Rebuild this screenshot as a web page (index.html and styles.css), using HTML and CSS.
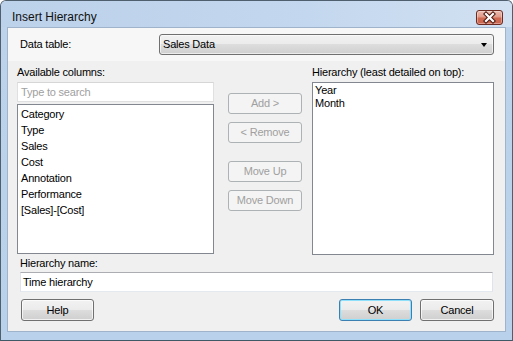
FILE: index.html
```html
<!DOCTYPE html>
<html>
<head>
<meta charset="utf-8">
<link rel="stylesheet" href="styles.css">
</head>
<body>
<div class="window">
  <div class="titlebar">
    <span class="title">Insert Hierarchy</span>
    <div class="close">
      <svg width="25" height="13" viewBox="0 0 25 13">
        <path d="M9 3 L16 10 M16 3 L9 10" stroke="#4a1a12" stroke-width="4.2" stroke-linecap="square" fill="none"/>
        <path d="M9 3 L16 10 M16 3 L9 10" stroke="#ffffff" stroke-width="2.2" stroke-linecap="square" fill="none"/>
      </svg>
    </div>
  </div>
  <div class="client">
    <div class="toppanel">
      <span class="toplabel">Data table:</span>
      <div class="combo">
        <span class="combo-text">Sales Data</span>
        <span class="arrow"></span>
      </div>
    </div>
    <div class="main">
      <div class="col-left">
        <div class="label">Available columns:</div>
        <div class="search">Type to search</div>
        <div class="list list-left">
          <div class="item">Category</div>
          <div class="item">Type</div>
          <div class="item">Sales</div>
          <div class="item">Cost</div>
          <div class="item">Annotation</div>
          <div class="item">Performance</div>
          <div class="item">[Sales]-[Cost]</div>
        </div>
      </div>
      <div class="col-buttons">
        <div class="btn disabled b-add">Add &gt;</div>
        <div class="btn disabled b-remove">&lt; Remove</div>
        <div class="btn disabled b-up">Move Up</div>
        <div class="btn disabled b-down">Move Down</div>
      </div>
      <div class="col-right">
        <div class="label">Hierarchy (least detailed on top):</div>
        <div class="list list-right">
          <div class="ritem">Year</div>
          <div class="ritem">Month</div>
        </div>
      </div>
    </div>
    <div class="namesec">
      <div class="label">Hierarchy name:</div>
      <div class="textbox">Time hierarchy</div>
    </div>
    <div class="footer">
      <div class="btn enabled b-help">Help</div>
      <div class="spacer"></div>
      <div class="btn enabled focused b-ok">OK</div>
      <div class="btn enabled b-cancel">Cancel</div>
    </div>
  </div>
</div>
</body>
</html>
```
FILE: styles.css
```css
* { box-sizing: border-box; }
html, body { margin: 0; padding: 0; background: #ffffff; }
body {
  font-family: "Liberation Sans", Arial, sans-serif;
  font-size: 11px;
  letter-spacing: -0.2px;
  color: #000;
}
.window {
  width: 513px;
  height: 341px;
  border: 1px solid #4f5f6e;
  border-bottom-color: #3f5a66;
  border-radius: 6px 6px 0 0;
  background: linear-gradient(to bottom, #c6d9ee 0px, #bcd3eb 30px, #b9d1ea 100%);
  display: flex;
  flex-direction: column;
  overflow: hidden;
}
.titlebar {
  height: 26px;
  display: flex;
  justify-content: space-between;
  align-items: flex-start;
  background: linear-gradient(to right, #bcd2ea 0%, #c3d7ee 60%, #d2e1f2 100%);
}
.title {
  font-size: 12px;
  letter-spacing: 0;
  line-height: 15px;
  padding-left: 11px;
  padding-top: 9px;
  color: #111;
}
.close {
  margin-top: 9px;
  margin-right: 9px;
  width: 27px;
  height: 15px;
  border: 1px solid #6d2a20;
  border-radius: 3px;
  background: linear-gradient(to bottom, #ecbcb0 0%, #e09a89 45%, #cf6a52 55%, #cc6650 100%);
  box-shadow: inset 0 0 0 1px rgba(255,255,255,0.35);
  display: flex;
  align-items: center;
  justify-content: center;
}
.close svg { display: block; }
.client {
  margin: 0 6px;
  width: 499px;
  height: 305px;
  border: 1px solid #9fb3cb;
  background: #f0f0f0;
  display: flex;
  flex-direction: column;
}
.toppanel {
  height: 33px;
  background: #f7f7f7;
  display: flex;
  align-items: center;
}
.toplabel {
  width: 151px;
  padding-left: 12px;
  line-height: 13px;
}
.combo {
  width: 335px;
  height: 21px;
  border: 1px solid #707070;
  border-radius: 3px;
  background: linear-gradient(to bottom, #f2f2f2 0%, #ebebeb 50%, #dddddd 50%, #cfcfcf 100%);
  box-shadow: inset 0 0 0 1px rgba(255,255,255,0.6);
  display: flex;
  align-items: center;
  justify-content: space-between;
  padding: 0 5px 0 3px;
}
.combo-text { line-height: 13px; }
.arrow {
  width: 0;
  height: 0;
  border-left: 3.5px solid transparent;
  border-right: 3.5px solid transparent;
  border-top: 4px solid #000;
  margin-right: 1px;
}
.main {
  height: 196px;
  display: flex;
  padding-left: 9px;
}
.label {
  line-height: 13px;
  white-space: nowrap;
}
.col-left { width: 197px; }
.col-left .label { margin-top: 5px; }
.search {
  margin-top: 3px;
  height: 20px;
  border: 1px solid #e0e0e0;
  border-top-color: #d6d6d6;
  background: #fff;
  color: #a0a0a0;
  line-height: 18px;
  padding-left: 3px;
}
.list {
  background: #fff;
  border: 1px solid #828790;
}
.list-left {
  margin-top: 2px;
  height: 150px;
  padding: 1px 0 0 3px;
}
.item { line-height: 16px; }
.col-buttons {
  width: 74px;
  margin-left: 14px;
  display: flex;
  flex-direction: column;
}
.btn {
  height: 21px;
  border-radius: 3px;
  display: flex;
  align-items: center;
  justify-content: center;
  line-height: 13px;
  white-space: nowrap;
}
.disabled {
  border: 1px solid #adb2b5;
  background: #f4f4f4;
  color: #a0a0a0;
}
.b-add { margin-top: 32px; }
.b-remove { margin-top: 8px; }
.b-up { margin-top: 18px; }
.b-down { margin-top: 8px; }
.col-right {
  width: 182px;
  margin-left: 10px;
}
.col-right .label { margin-top: 5px; }
.list-right {
  margin-top: 3px;
  height: 173px;
  padding: 1px 0 0 2px;
}
.ritem { line-height: 13px; }
.namesec { padding-left: 12px; }
.textbox {
  margin-top: 2px;
  width: 473px;
  height: 20px;
  border: 1px solid #dbdfe6;
  border-top-color: #abadb3;
  border-left-color: #e2e3ea;
  border-right-color: #e2e3ea;
  border-bottom-color: #e3e9ef;
  background: #fff;
  line-height: 18px;
  padding-left: 2px;
}
.footer {
  margin-top: 7px;
  display: flex;
  padding-left: 13px;
}
.spacer { width: 245px; }
.enabled {
  height: 22px;
  border: 1px solid #707070;
  background: linear-gradient(to bottom, #f2f2f2 0%, #ebebeb 50%, #dddddd 50%, #cfcfcf 100%);
  box-shadow: inset 0 0 0 1px rgba(255,255,255,0.7);
  color: #000;
}
.b-help { width: 73px; }
.b-ok { width: 73px; }
.b-cancel { width: 74px; margin-left: 8px; }
.focused {
  border-color: #3c7fb1;
  box-shadow: inset 0 0 0 1px #8fe0fb;
}
```
